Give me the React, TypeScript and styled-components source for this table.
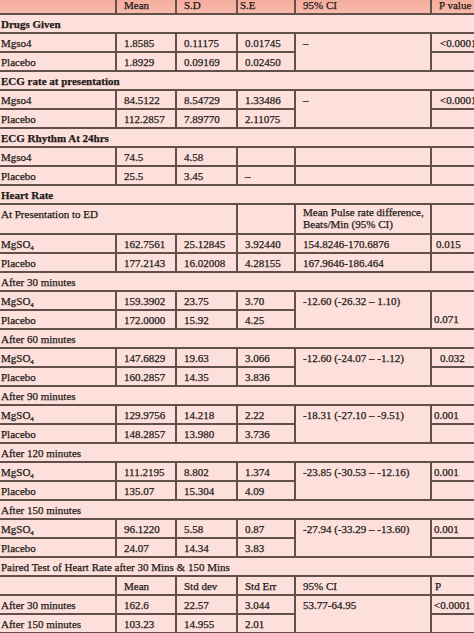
import * as React from "react";
import styled, { createGlobalStyle } from "styled-components";

const GlobalStyle = createGlobalStyle`
  html, body {
    margin: 0;
    padding: 0;
    background: #fde0db;
  }
`;

const Frame = styled.div`
  width: 474px;
  height: 633px;
  overflow: hidden;
  background: #fde0db;
`;

// the source table is cropped on its top and right edges
const Table = styled.table`
  margin-top: -6px;
  width: 484px;
  border-collapse: collapse;
  table-layout: fixed;
  font-family: "Liberation Serif", "Times New Roman", serif;
  font-size: 11px;
  color: #231b19;
  -webkit-text-stroke: 0.25px #231b19;
`;

const HeadRow = styled.tr`
  background: linear-gradient(#f4a796, #f8bcae);
`;

const Row = styled.tr<{ $tall?: boolean }>`
  height: ${p => (p.$tall ? 30 : 19)}px;
`;

const Cell = styled.td<{ $pad?: number; $align?: "top" | "bottom"; $bold?: boolean; $tight?: boolean }>`
  height: 19px;
  box-sizing: border-box;
  padding: ${p => (p.$align === "bottom" ? "0 2px 1px" : "2px 2px 0")};
  padding-left: ${p => p.$pad ?? 7}px;
  line-height: ${p => (p.$tight ? 11.5 : 15)}px;
  vertical-align: ${p => p.$align ?? "top"};
  border: 2px solid #62504b;
  white-space: nowrap;
  overflow: hidden;
  font-weight: ${p => (p.$bold ? 700 : 400)};

  &:first-child {
    border-left: none;
  }
`;

const Sub = styled.sub`
  font-size: 7px;
  line-height: 0;
  vertical-align: -2px;
`;

const Mg = () => (
  <>
    MgSO<Sub>4</Sub>
  </>
);

interface Line {
  label: React.ReactNode;
  mean: string;
  sd: string;
  se: string;
  ci?: string;
  p?: string;
  pPad?: number;
}

interface PairProps {
  rows: Line[];
  ci?: string;
  pSpan?: string;
}

function Pair({ rows, ci, pSpan }: PairProps) {
  return (
    <>
      {rows.map((r, i) => (
        <Row key={i}>
          <Cell $pad={1}>{r.label}</Cell>
          <Cell>{r.mean}</Cell>
          <Cell>{r.sd}</Cell>
          <Cell>{r.se}</Cell>
          {ci !== undefined ? (
            i === 0 && <Cell rowSpan={rows.length}>{ci}</Cell>
          ) : (
            <Cell>{r.ci}</Cell>
          )}
          {pSpan !== undefined ? (
            i === 0 && (
              <Cell rowSpan={rows.length} $align="bottom" $pad={2}>
                {pSpan}
              </Cell>
            )
          ) : (
            <Cell $pad={r.pPad ?? 2}>{r.p}</Cell>
          )}
        </Row>
      ))}
    </>
  );
}

function Title({ children, bold }: { children: React.ReactNode; bold?: boolean }) {
  return (
    <Row>
      <Cell colSpan={6} $pad={1} $bold={bold}>
        {children}
      </Cell>
    </Row>
  );
}

export default function App() {
  return (
    <Frame>
      <GlobalStyle />
      <Table>
        <colgroup>
          <col style={{ width: 116 }} />
          <col style={{ width: 60 }} />
          <col style={{ width: 61 }} />
          <col style={{ width: 58 }} />
          <col style={{ width: 136 }} />
          <col style={{ width: 53 }} />
        </colgroup>
        <tbody>
          <HeadRow>
            <Cell $pad={1} />
            <Cell>Mean</Cell>
            <Cell>S.D</Cell>
            <Cell $pad={2}>S.E</Cell>
            <Cell>95% CI</Cell>
            <Cell>P value</Cell>
          </HeadRow>

          <Title bold>Drugs Given</Title>
          <Pair
            ci="–"
            rows={[
              { label: "Mgso4", mean: "1.8585", sd: "0.11175", se: "0.01745", p: "<0.0001", pPad: 8 },
              { label: "Placebo", mean: "1.8929", sd: "0.09169", se: "0.02450", p: "" },
            ]}
          />

          <Title bold>ECG rate at presentation</Title>
          <Pair
            ci="–"
            rows={[
              { label: "Mgso4", mean: "84.5122", sd: "8.54729", se: "1.33486", p: "<0.0001", pPad: 8 },
              { label: "Placebo", mean: "112.2857", sd: "7.89770", se: "2.11075", p: "" },
            ]}
          />

          <Title bold>ECG Rhythm At 24hrs</Title>
          <Pair
            rows={[
              { label: "Mgso4", mean: "74.5", sd: "4.58", se: "", ci: "", p: "" },
              { label: "Placebo", mean: "25.5", sd: "3.45", se: "–", ci: "", p: "" },
            ]}
          />

          <Title bold>Heart Rate</Title>
          <Row $tall>
            <Cell colSpan={3} $pad={1}>
              At Presentation to ED
            </Cell>
            <Cell />
            <Cell $tight>
              Mean Pulse rate difference,
              <br />
              Beats/Min (95% CI)
            </Cell>
            <Cell />
          </Row>
          <Pair
            rows={[
              { label: <Mg />, mean: "162.7561", sd: "25.12845", se: "3.92440", ci: "154.8246-170.6876", p: "0.015", pPad: 4 },
              { label: "Placebo", mean: "177.2143", sd: "16.02008", se: "4.28155", ci: "167.9646-186.464", p: "" },
            ]}
          />

          <Title>After 30 minutes</Title>
          <Pair
            ci="-12.60 (-26.32 – 1.10)"
            pSpan="0.071"
            rows={[
              { label: <Mg />, mean: "159.3902", sd: "23.75", se: "3.70" },
              { label: "Placebo", mean: "172.0000", sd: "15.92", se: "4.25" },
            ]}
          />

          <Title>After 60 minutes</Title>
          <Pair
            ci="-12.60 (-24.07 – -1.12)"
            rows={[
              { label: <Mg />, mean: "147.6829", sd: "19.63", se: "3.066", p: "0.032", pPad: 8 },
              { label: "Placebo", mean: "160.2857", sd: "14.35", se: "3.836", p: "" },
            ]}
          />

          <Title>After 90 minutes</Title>
          <Pair
            ci="-18.31 (-27.10 – -9.51)"
            rows={[
              { label: <Mg />, mean: "129.9756", sd: "14.218", se: "2.22", p: "0.001" },
              { label: "Placebo", mean: "148.2857", sd: "13.980", se: "3.736", p: "" },
            ]}
          />

          <Title>After 120 minutes</Title>
          <Pair
            ci="-23.85 (-30.53 – -12.16)"
            rows={[
              { label: <Mg />, mean: "111.2195", sd: "8.802", se: "1.374", p: "0.001" },
              { label: "Placebo", mean: "135.07", sd: "15.304", se: "4.09", p: "" },
            ]}
          />

          <Title>After 150 minutes</Title>
          <Pair
            ci="-27.94 (-33.29 – -13.60)"
            rows={[
              { label: <Mg />, mean: "96.1220", sd: "5.58", se: "0.87", p: "0.001" },
              { label: "Placebo", mean: "24.07", sd: "14.34", se: "3.83", p: "" },
            ]}
          />

          <Title>Paired Test of Heart Rate after 30 Mins &amp; 150 Mins</Title>
          <Row>
            <Cell $pad={1} />
            <Cell>Mean</Cell>
            <Cell>Std dev</Cell>
            <Cell>Std Err</Cell>
            <Cell>95% CI</Cell>
            <Cell $pad={3}>P</Cell>
          </Row>
          <Pair
            ci="53.77-64.95"
            rows={[
              { label: "After 30 minutes", mean: "162.6", sd: "22.57", se: "3.044", p: "<0.0001" },
              { label: "After 150 minutes", mean: "103.23", sd: "14.955", se: "2.01", p: "" },
            ]}
          />
        </tbody>
      </Table>
    </Frame>
  );
}
